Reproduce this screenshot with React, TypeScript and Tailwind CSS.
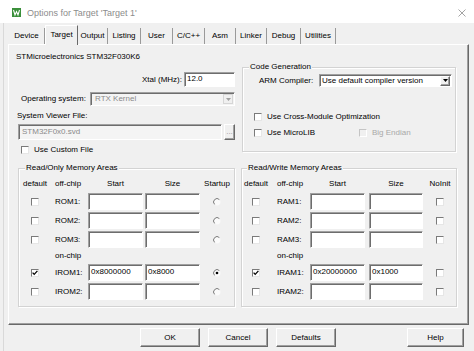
import React from 'react'

const sunken =
  'border border-t-[#a0a0a0] border-l-[#a0a0a0] border-b-white border-r-white shadow-[inset_1px_1px_0_#6d6d6d]'
const raised =
  'border border-t-white border-l-white border-b-[#696969] border-r-[#696969] shadow-[inset_-1px_-1px_0_#a0a0a0] bg-[#f0f0f0]'

function Check({ on = false, off = false }: { on?: boolean; off?: boolean }) {
  return (
    <span
      className={
        off
          ? 'flex h-[8px] w-[8px] shrink-0 items-center justify-center border border-t-[#c4c4c4] border-l-[#c4c4c4] border-b-white border-r-white bg-[#f0f0f0]'
          : 'flex h-[8px] w-[8px] shrink-0 items-center justify-center border border-t-[#7a7a7a] border-l-[#7a7a7a] border-b-[#e6e6e6] border-r-[#e6e6e6] bg-white'
      }
    >
      {on && (
        <svg width="6" height="6" viewBox="0 0 6 6">
          <path d="M0.6 2.6 L2.2 4.4 L5.4 0.9" stroke="#000" strokeWidth="1.3" fill="none" />
        </svg>
      )}
    </span>
  )
}

function Radio({ on = false }: { on?: boolean }) {
  return (
    <svg width="8" height="8" viewBox="0 0 8 8">
      <circle cx="4" cy="4" r="3.4" fill="#fbfbfb" />
      <path d="M1.6 6.4 A3.3 3.3 0 0 1 6.4 1.6" stroke="#7a7a7a" strokeWidth="1" fill="none" />
      {on && <circle cx="4" cy="4" r="1.3" fill="#000" />}
    </svg>
  )
}

function Arrow({ grey = false }: { grey?: boolean }) {
  return (
    <svg width="5" height="3" viewBox="0 0 5 3">
      <path d="M0 0 H5 L2.5 3 Z" fill={grey ? '#a0a0a0' : '#000'} />
    </svg>
  )
}

function CheckRow({ label, on, off }: { label: string; on?: boolean; off?: boolean }) {
  return (
    <div className="flex h-[10px] items-center gap-[5px]">
      <Check on={on} off={off} />
      <span className={off ? 'text-[#a8a8a8]' : ''}>{label}</span>
    </div>
  )
}

type MemRow = { label: string; def?: boolean; start?: string; size?: string; sel?: boolean }

function MemGroup({ title, ro, rows }: { title: string; ro: boolean; rows: MemRow[] }) {
  const cols = ro ? 'grid-cols-[32px_37px_57px_55px_1fr]' : 'grid-cols-[28px_40px_59px_55px_1fr]'
  const lab = ro ? 'pl-[4px]' : 'pl-[7px]'
  const sizeW = ro ? 'w-[55px]' : 'w-[54px]'

  const row = (r: MemRow) => (
    <React.Fragment key={r.label}>
      <div className="flex h-[17px] items-center justify-center">
        <Check on={r.def} />
      </div>
      <div className={`flex h-[17px] items-center ${lab}`}>{r.label}</div>
      <div className={`h-[17px] w-[55px] bg-white pl-[2px] pt-[2px] ${sunken}`}>{r.start}</div>
      <div className={`h-[17px] ${sizeW} bg-white pl-[2px] pt-[2px] ${sunken}`}>{r.size}</div>
      <div className="flex h-[17px] items-center justify-center">
        {ro ? <Radio on={r.sel} /> : <Check />}
      </div>
    </React.Fragment>
  )

  return (
    <fieldset
      className={`border border-[#d3d3d3] shadow-[1px_1px_0_#fff,inset_1px_1px_0_#fff] ${
        ro ? 'ml-[2px] w-[217px]' : 'ml-[6px] w-[216px]'
      }`}
    >
      <legend className={`bg-[#f0f0f0] px-[1px] leading-[10px] ${ro ? 'ml-[6px]' : 'ml-[5px]'}`}>{title}</legend>
      <div className={`grid ${cols} gap-y-[2px] pb-[6px] pt-[3px]`}>
        <div className="flex h-[15px] items-center justify-center">default</div>
        <div className={`flex h-[15px] items-center ${lab}`}>off-chip</div>
        <div className="flex h-[15px] w-[55px] items-center justify-center">Start</div>
        <div className={`flex h-[15px] ${sizeW} items-center justify-center`}>Size</div>
        <div className="flex h-[15px] items-center justify-center">{ro ? 'Startup' : 'NoInit'}</div>
        {rows.slice(0, 3).map(row)}
        <div className="h-[12px]" />
        <div className={`flex h-[12px] items-center ${lab}`}>on-chip</div>
        <div className="h-[12px]" />
        <div className="h-[12px]" />
        <div className="h-[12px]" />
        {rows.slice(3).map(row)}
      </div>
    </fieldset>
  )
}

const tabs = [
  { name: 'Device', w: 'w-[36px]' },
  { name: 'Target', w: 'w-[33px]', active: true },
  { name: 'Output', w: 'w-[30px]' },
  { name: 'Listing', w: 'w-[33px]' },
  { name: 'User', w: 'w-[32px]' },
  { name: 'C/C++', w: 'w-[32px]' },
  { name: 'Asm', w: 'w-[31px]' },
  { name: 'Linker', w: 'w-[31px]' },
  { name: 'Debug', w: 'w-[34px]' },
  { name: 'Utilities', w: 'w-[35px]' },
]

const romRows: MemRow[] = [
  { label: 'ROM1:' },
  { label: 'ROM2:' },
  { label: 'ROM3:' },
  { label: 'IROM1:', def: true, start: '0x8000000', size: '0x8000', sel: true },
  { label: 'IROM2:' },
]

const ramRows: MemRow[] = [
  { label: 'RAM1:' },
  { label: 'RAM2:' },
  { label: 'RAM3:' },
  { label: 'IRAM1:', def: true, start: '0x20000000', size: '0x1000' },
  { label: 'IRAM2:' },
]

export default function App() {
  return (
    <div className="h-[351px] w-[474px] overflow-hidden bg-[#f0f0f0] font-['Liberation_Sans',Arial,sans-serif] text-[8px] leading-[10px] text-black">
      {/* title bar */}
      <div className="flex h-[23px] items-center bg-white pt-[2px]">
        <svg className="ml-[12px]" width="9" height="9" viewBox="0 0 9 9">
          <rect width="9" height="9" fill="#3a8f3a" />
          <path d="M1.5 2 L3 7 L4.5 3.6 L6 7 L7.5 2" stroke="#fff" strokeWidth="1.1" fill="none" />
        </svg>
        <span className="ml-[6px] text-[9px] text-[#8c8c8c]">Options for Target 'Target 1'</span>
        <svg className="ml-auto mr-[8px]" width="8" height="8" viewBox="0 0 8 8">
          <path d="M0.5 0.5 L7.5 7.5 M7.5 0.5 L0.5 7.5" stroke="#9a9a9a" strokeWidth="0.9" />
        </svg>
      </div>

      <div className="ml-[3px] h-[328px] border-l border-[#d9d9d9]">
        {/* tabs */}
        <div className="flex h-[21px] items-end pl-[5px]">
          {tabs.map((t) =>
            t.active ? (
              <div
                key={t.name}
                className={`relative z-10 -mb-[1px] flex h-[20px] ${t.w} items-center justify-center border-l border-t border-r border-l-white border-t-white border-r-[#696969] bg-[#f0f0f0] pb-[2px]`}
              >
                {t.name}
              </div>
            ) : (
              <div
                key={t.name}
                className={`flex h-[16px] ${t.w} items-center justify-center border-r border-[#9a9a9a]`}
              >
                {t.name}
              </div>
            ),
          )}
        </div>

        {/* tab page */}
        <div className="ml-[4px] h-[281px] w-[461px] border border-t-white border-l-white border-r-[#696969] border-b-[#696969] pl-[7px] shadow-[inset_-1px_-1px_0_#a0a0a0]">
          <div className="flex items-start">
            <div className="w-[219px]">
              <div className="mt-[7px]">STMicroelectronics STM32F030K6</div>
              <div className="mt-[10px] flex h-[15px] items-center justify-end">
                <span>Xtal (MHz):</span>
                <div className={`ml-[2px] h-[15px] w-[51px] bg-white pl-[2px] pt-[1px] ${sunken}`}>12.0</div>
              </div>
              <div className="mt-[5px] flex h-[14px] items-center">
                <span className="pl-[5px]">Operating system:</span>
                <div className={`ml-auto flex h-[14px] w-[145px] items-center bg-[#f4f4f4] pl-[4px] ${sunken}`}>
                  <span className="text-[#8a8a8a]">RTX Kernel</span>
                  <span className="ml-auto mr-[1px] flex h-[10px] w-[10px] items-center justify-center border border-[#d6d6d6] bg-[#f0f0f0]">
                    <Arrow grey />
                  </span>
                </div>
              </div>
              <div className="mt-[5px] pl-[1px]">System Viewer File:</div>
              <div className="mt-[3px] flex h-[16px] pl-[2px]">
                <div className={`h-[16px] w-[204px] bg-[#f4f4f4] pl-[3px] pt-[2px] text-[#8a8a8a] ${sunken}`}>
                  STM32F0x0.svd
                </div>
                <div className={`ml-[2px] flex h-[16px] w-[11px] items-end justify-center pb-[2px] text-[#9a9a9a] ${raised}`}>
                  ...
                </div>
              </div>
              <div className="mt-[5px] pl-[5px]">
                <CheckRow label="Use Custom File" />
              </div>
            </div>

            <div className="ml-[7px] w-[214px]">
              <fieldset className="mt-[17px] border border-[#d3d3d3] shadow-[1px_1px_0_#fff,inset_1px_1px_0_#fff]">
                <legend className="ml-[6px] bg-[#f0f0f0] px-[1px] leading-[10px]">Code Generation</legend>
                <div className="pb-[13px] pl-[11px]">
                  <div className="mt-[2px] flex h-[13px] items-center pl-[5px]">
                    <span className="w-[60px]">ARM Compiler:</span>
                    <div className={`flex h-[13px] w-[133px] items-center bg-white pl-[2px] ${sunken}`}>
                      <span>Use default compiler version</span>
                      <span className={`ml-auto mr-[1px] flex h-[10px] w-[10px] items-center justify-center ${raised}`}>
                        <Arrow />
                      </span>
                    </div>
                  </div>
                  <div className="mt-[25px]">
                    <CheckRow label="Use Cross-Module Optimization" />
                  </div>
                  <div className="mt-[6px] flex">
                    <div className="w-[105px]">
                      <CheckRow label="Use MicroLIB" />
                    </div>
                    <CheckRow label="Big Endian" off />
                  </div>
                </div>
              </fieldset>
            </div>
          </div>

          <div className="mt-[8px] flex">
            <MemGroup title="Read/Only Memory Areas" ro rows={romRows} />
            <MemGroup title="Read/Write Memory Areas" ro={false} rows={ramRows} />
          </div>
        </div>

        {/* buttons */}
        <div className="mt-[3px] flex h-[19px]">
          <button className={`ml-[136px] w-[60px] ${raised}`}>OK</button>
          <button className={`ml-[8px] w-[60px] ${raised}`}>Cancel</button>
          <button className={`ml-[8px] w-[60px] ${raised}`}>Defaults</button>
          <button className={`ml-[71px] w-[57px] ${raised}`}>Help</button>
        </div>
      </div>
    </div>
  )
}
